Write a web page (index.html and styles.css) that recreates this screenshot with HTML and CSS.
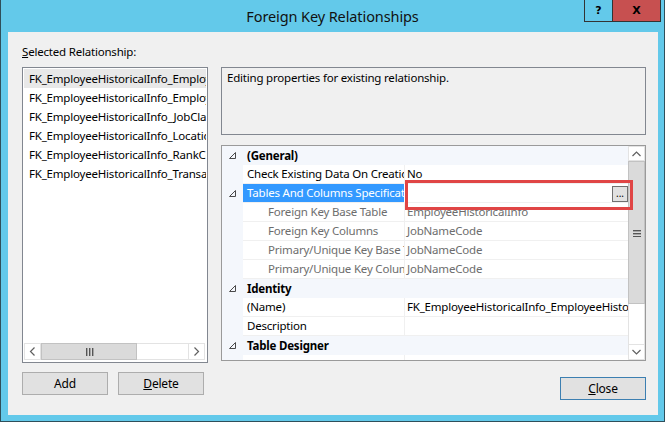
FILE: index.html
```html
<!DOCTYPE html>
<html>
<head>
<meta charset="utf-8">
<link rel="stylesheet" href="styles.css">
</head>
<body>
<div class="window">
  <div class="titlebar">
    <div></div>
    <div class="title">Foreign Key Relationships</div>
    <div class="caption-btns">
      <div class="cbtn help">?</div>
      <div class="cbtn close">X</div>
    </div>
  </div>
  <div class="client">
    <div class="left">
      <div class="label"><u>S</u>elected Relationship:</div>
      <div class="listbox">
        <div class="items">
          <div class="item sel">FK_EmployeeHistoricalInfo_EmployeeType</div>
          <div class="item">FK_EmployeeHistoricalInfo_EmployeeStatus</div>
          <div class="item">FK_EmployeeHistoricalInfo_JobClass</div>
          <div class="item">FK_EmployeeHistoricalInfo_Location</div>
          <div class="item">FK_EmployeeHistoricalInfo_RankCode</div>
          <div class="item">FK_EmployeeHistoricalInfo_TransactionType</div>
        </div>
        <div class="hscroll">
          <div class="sb-btn"><svg width="7" height="9" viewBox="0 0 7 9"><polyline points="5.5,0.5 1.5,4.5 5.5,8.5" fill="none" stroke="#606060" stroke-width="1.2"/></svg></div>
          <div class="sb-thumb-h"><svg width="9" height="8" viewBox="0 0 9 8"><rect x="1" y="0" width="1.4" height="8" fill="#555"/><rect x="4" y="0" width="1.4" height="8" fill="#555"/><rect x="7" y="0" width="1.4" height="8" fill="#555"/></svg></div>
          <div class="sb-track-h"></div>
          <div class="sb-btn"><svg width="7" height="9" viewBox="0 0 7 9"><polyline points="1.5,0.5 5.5,4.5 1.5,8.5" fill="none" stroke="#606060" stroke-width="1.2"/></svg></div>
        </div>
      </div>
      <div class="btnrow">
        <div class="btn">Add</div>
        <div class="btn"><u>D</u>elete</div>
      </div>
    </div>
    <div class="right">
      <div class="desc">Editing properties for existing relationship.</div>
      <div class="grid">
        <div class="rows">
          <div class="row cat"><div class="gut"><svg width="7" height="7" viewBox="0 0 7 7"><polygon points="6.5,0.5 6.5,6.5 0.5,6.5" fill="none" stroke="#4a4a4a"/></svg></div><div class="catname">(General)</div></div>
          <div class="row"><div class="gut"></div><div class="name">Check Existing Data On Creation Or Re-Enabling</div><div class="val">No</div></div>
          <div class="row selrow"><div class="gut"><svg width="7" height="7" viewBox="0 0 7 7"><polygon points="6.5,0.5 6.5,6.5 0.5,6.5" fill="none" stroke="#4a4a4a"/></svg></div><div class="name">Tables And Columns Specification</div><div class="val"><div class="ell">...</div></div></div>
          <div class="row sub"><div class="gut"></div><div class="name">Foreign Key Base Table</div><div class="val">EmployeeHistoricalInfo</div></div>
          <div class="row sub"><div class="gut"></div><div class="name">Foreign Key Columns</div><div class="val">JobNameCode</div></div>
          <div class="row sub"><div class="gut"></div><div class="name">Primary/Unique Key Base Table</div><div class="val">JobNameCode</div></div>
          <div class="row sub"><div class="gut"></div><div class="name">Primary/Unique Key Columns</div><div class="val">JobNameCode</div></div>
          <div class="row cat"><div class="gut"><svg width="7" height="7" viewBox="0 0 7 7"><polygon points="6.5,0.5 6.5,6.5 0.5,6.5" fill="none" stroke="#4a4a4a"/></svg></div><div class="catname">Identity</div></div>
          <div class="row"><div class="gut"></div><div class="name">(Name)</div><div class="val">FK_EmployeeHistoricalInfo_EmployeeHistoricalInfo</div></div>
          <div class="row"><div class="gut"></div><div class="name">Description</div><div class="val"></div></div>
          <div class="row cat"><div class="gut"><svg width="7" height="7" viewBox="0 0 7 7"><polygon points="6.5,0.5 6.5,6.5 0.5,6.5" fill="none" stroke="#4a4a4a"/></svg></div><div class="catname">Table Designer</div></div>
          <div class="row"><div class="gut"></div><div class="name"></div><div class="val"></div></div>
        </div>
        <div class="vscroll">
          <div class="sb-btn-v up"><svg width="9" height="6" viewBox="0 0 9 6"><polyline points="0.5,5 4.5,1 8.5,5" fill="none" stroke="#606060" stroke-width="1.2"/></svg></div>
          <div class="sb-thumb-v"><svg width="8" height="8" viewBox="0 0 8 8"><rect x="0" y="1" width="8" height="1.4" fill="#555"/><rect x="0" y="4" width="8" height="1.4" fill="#555"/><rect x="0" y="7" width="8" height="1.4" fill="#555"/></svg></div>
          <div class="sb-track-v"></div>
          <div class="sb-btn-v down"><svg width="9" height="6" viewBox="0 0 9 6"><polyline points="0.5,1 4.5,5 8.5,1" fill="none" stroke="#606060" stroke-width="1.2"/></svg></div>
        </div>
        <div class="annot"></div>
      </div>
      <div class="closerow">
        <div class="btn default"><u>C</u>lose</div>
      </div>
    </div>
  </div>
</div>
</body>
</html>
```

FILE: styles.css
```css
html, body {
  margin: 0;
  padding: 0;
  background: #ffffff;
}
body {
  font-family: "Segoe UI", "Noto Sans", "Open Sans", sans-serif;
  font-size: 11.5px;
  letter-spacing: -0.2px;
  color: #000;
}
.window {
  width: 665px;
  height: 422px;
  box-sizing: border-box;
  background: #63c9ea;
  border: 1px solid #2f4f5a;
  border-top: none;
  display: flex;
  flex-direction: column;
}
.titlebar {
  height: 32px;
  display: grid;
  grid-template-columns: 1fr auto 1fr;
  align-items: start;
}
.title {
  font-size: 14.5px;
  letter-spacing: -0.1px;
  line-height: 32px;
  color: #111;
}
.caption-btns {
  justify-self: end;
  margin-right: 3px;
  display: flex;
  border: 1px solid #333;
  border-top: none;
  height: 21px;
}
.cbtn {
  font-family: "DejaVu Sans", sans-serif;
  font-weight: bold;
  font-size: 11px;
  letter-spacing: 0;
  line-height: 21px;
  text-align: center;
  color: #000;
}
.help {
  width: 27px;
  border-right: 1px solid #333;
}
.close {
  width: 47px;
  background: #c75050;
}
.client {
  flex: 1;
  margin: 0 6px 6px 7px;
  background: #f0f0f0;
  display: flex;
  padding-left: 14px;
}
.left {
  width: 186px;
  padding-top: 12px;
  display: flex;
  flex-direction: column;
}
.label {
  height: 16px;
  line-height: 16px;
  margin-bottom: 7px;
}
.listbox {
  height: 296px;
  box-sizing: border-box;
  border: 1px solid #828790;
  background: #fff;
  display: flex;
  flex-direction: column;
}
.items {
  flex: 1;
  padding: 1px 1px 0 1px;
  overflow: hidden;
}
.item {
  height: 19px;
  line-height: 19px;
  padding-left: 5px;
  white-space: nowrap;
  overflow: hidden;
}
.item.sel {
  background: #e8e8e8;
}
.hscroll {
  height: 17px;
  margin: 0 2px 2px 1px;
  display: flex;
  box-sizing: border-box;
}
.sb-btn {
  width: 17px;
  box-sizing: border-box;
  border: 1px solid #e3e3e3;
  display: flex;
  align-items: center;
  justify-content: center;
  background: #fff;
}
.sb-thumb-h {
  width: 96px;
  box-sizing: border-box;
  background: #dadada;
  border: 1px solid #c2c2c2;
  display: flex;
  align-items: center;
  justify-content: center;
}
.sb-track-h {
  flex: 1;
  border-top: 1px solid #e3e3e3;
  border-bottom: 1px solid #e3e3e3;
  background: #fff;
}
.btnrow {
  margin-top: 9px;
  display: flex;
  gap: 10px;
}
.btn {
  width: 86px;
  height: 23px;
  box-sizing: border-box;
  border: 1px solid #adadad;
  background: #e1e1e1;
  text-align: center;
  line-height: 21px;
  font-size: 12px;
}
.right {
  width: 425px;
  margin-left: 13px;
  padding-top: 35px;
  display: flex;
  flex-direction: column;
}
.desc {
  height: 68px;
  box-sizing: border-box;
  border: 1px solid #828790;
  padding: 2px 5px;
  line-height: 16px;
}
.grid {
  position: relative;
  margin-top: 10px;
  height: 216px;
  box-sizing: border-box;
  border: 1px solid #9a9a9a;
  background: #fff;
  display: flex;
  overflow: hidden;
}
.rows {
  width: 406px;
  display: flex;
  flex-direction: column;
  overflow: hidden;
}
.row {
  height: 19px;
  flex: 0 0 19px;
  display: flex;
  white-space: nowrap;
}
.gut {
  width: 21px;
  flex: 0 0 21px;
  background: #f4f7fc;
  display: flex;
  align-items: center;
  justify-content: center;
}
.catname {
  flex: 1;
  background: #f4f7fc;
  font-weight: bold;
  line-height: 19px;
  padding-left: 4px;
}
.name {
  box-sizing: content-box;
  border-right: 1px solid #f0f0f0;
  border-bottom: 1px solid #f0f0f0;
  line-height: 18px;
  padding-left: 4px;
  width: 157px;
  flex: 0 0 157px;
  overflow: hidden;
}
.val {
  flex: 1;
  border-bottom: 1px solid #f0f0f0;
  line-height: 18px;
  padding-left: 2px;
  overflow: hidden;
  display: flex;
  justify-content: flex-start;
}
.sub .name {
  padding-left: 25px;
  width: 136px;
  flex-basis: 136px;
  color: #6d6d6d;
}
.sub .val {
  color: #6d6d6d;
}
.selrow .name {
  background: #3399ff;
  color: #fff;
  border-right-color: #fff;
}
.selrow .val {
  justify-content: flex-end;
  align-items: flex-end;
}
.ell {
  width: 16px;
  height: 16px;
  box-sizing: border-box;
  border: 1px solid #707070;
  background: #e1e1e1;
  font-size: 10px;
  letter-spacing: 0;
  line-height: 12px;
  text-align: center;
}
.vscroll {
  width: 17px;
  display: flex;
  flex-direction: column;
}
.sb-btn-v {
  height: 15px;
  box-sizing: border-box;
  border: 1px solid #e3e3e3;
  display: flex;
  align-items: center;
  justify-content: center;
  background: #fff;
}
.sb-btn-v.down {
  height: 16px;
}
.sb-thumb-v {
  height: 143px;
  box-sizing: border-box;
  background: #dadada;
  border: 1px solid #c2c2c2;
  display: flex;
  align-items: center;
  justify-content: center;
}
.sb-track-v {
  flex: 1;
  border-left: 1px solid #e3e3e3;
  border-right: 1px solid #e3e3e3;
  background: #fff;
}
.annot {
  position: absolute;
  left: 183px;
  top: 34px;
  width: 228px;
  height: 30px;
  box-sizing: border-box;
  border: 3px solid #e04545;
}
.closerow {
  margin-top: 16px;
  display: flex;
  justify-content: flex-end;
}
.btn.default {
  border-color: #3c7fb1;
}
```
